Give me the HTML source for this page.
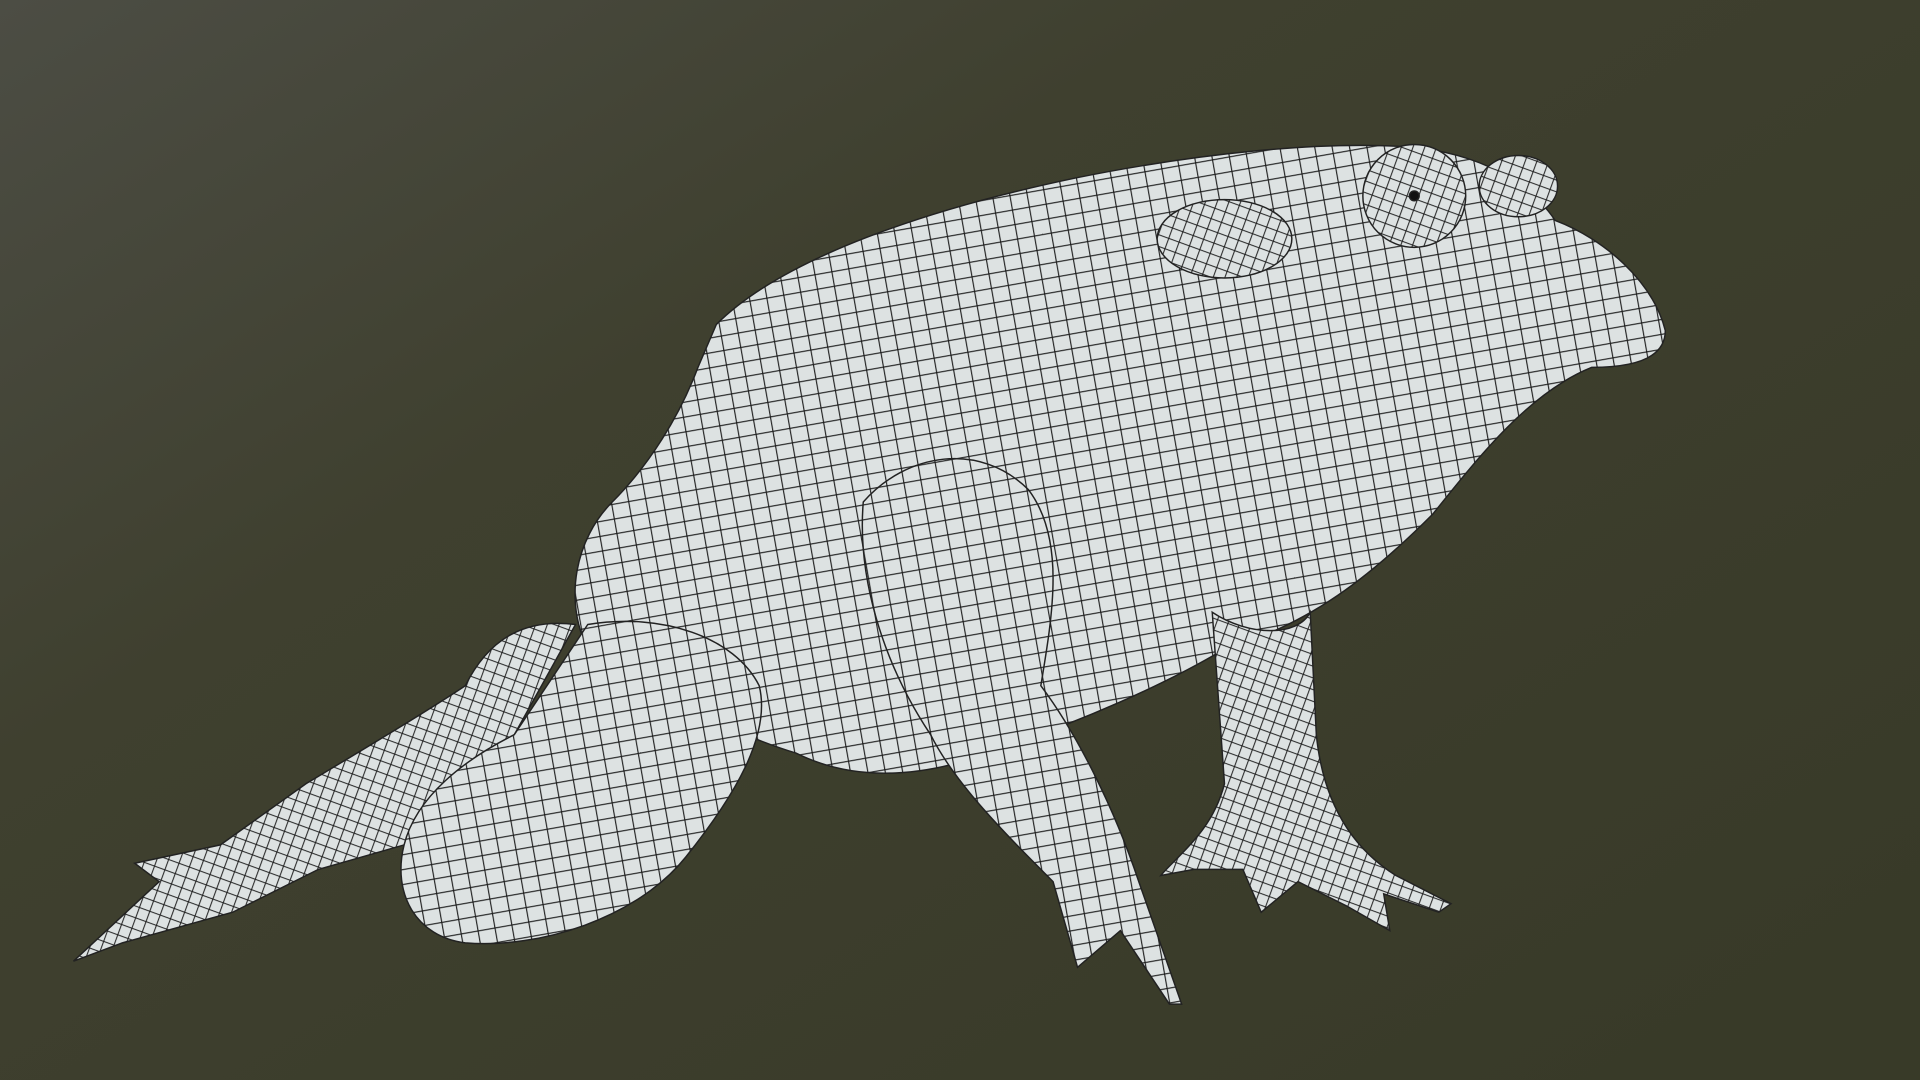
<!DOCTYPE html>
<html><head><style>
html,body{margin:0;padding:0;width:1920px;height:1080px;overflow:hidden;background:#3a3c2c}
svg{display:block}
</style></head><body>
<svg width="1920" height="1080" viewBox="0 0 1568 882" xmlns="http://www.w3.org/2000/svg">
<defs>
<linearGradient id="bg" x1="0" y1="0" x2="1" y2="0.9">
<stop offset="0" stop-color="#4c4d44"/>
<stop offset="0.35" stop-color="#3f402f"/>
<stop offset="1" stop-color="#383a28"/>
</linearGradient>
<pattern id="mesh" width="14" height="12" patternUnits="userSpaceOnUse" patternTransform="rotate(-10)">
<rect width="14" height="12" fill="#dde2e2"/>
<path d="M0 0.5H14M0.5 0V12" stroke="#1a1a1a" stroke-width="0.9"/>
</pattern>
<pattern id="mesh2" width="9" height="9" patternUnits="userSpaceOnUse" patternTransform="rotate(20)">
<rect width="9" height="9" fill="#dde2e2"/>
<path d="M0 0.5H9M0.5 0V9" stroke="#1a1a1a" stroke-width="0.8"/>
</pattern>
</defs>
<rect width="1568" height="882" fill="url(#bg)"/>
<g stroke="#222" stroke-width="1.2">
<path fill="url(#mesh2)" d="M470,510 C430,505 400,520 380,560 C350,580 300,610 250,640 L180,690 L110,705 L130,720 L60,785 L100,770 L190,745 L260,710 L330,690 L420,600 Z"/>
<path fill="url(#mesh)" d="M585,265 C640,210 760,170 880,145 C980,125 1080,115 1150,120 C1210,125 1250,150 1270,180 C1310,195 1350,230 1360,270 C1360,290 1340,300 1300,300 C1250,320 1210,370 1170,420 C1120,470 1070,510 1000,530 C950,560 880,590 820,610 C760,635 700,640 650,615 C600,600 520,560 480,530 C460,490 470,440 500,410 C530,380 555,340 570,300 Z"/>
<path fill="url(#mesh)" d="M480,510 C540,500 600,520 620,560 C630,600 600,650 560,700 C520,750 440,775 380,770 C340,765 320,730 330,690 C340,650 380,620 420,600 Z"/>
<path fill="url(#mesh2)" d="M990,500 C1020,520 1060,520 1070,500 L1075,600 C1080,650 1100,690 1140,715 L1185,738 L1175,745 L1130,730 L1135,760 L1100,740 L1060,720 L1030,745 L1015,710 L975,710 L948,715 C960,700 990,680 1000,640 Z"/>
<path fill="url(#mesh)" d="M705,410 C740,370 800,360 840,400 C870,440 860,500 850,560 C880,600 910,660 930,720 L965,820 L955,820 L915,760 L880,790 L860,720 C820,680 780,640 760,600 C720,540 700,470 705,410 Z"/>
<ellipse cx="1000" cy="195" rx="55" ry="32" fill="url(#mesh2)"/>
<ellipse cx="1240" cy="152" rx="32" ry="25" fill="url(#mesh2)"/>
<circle cx="1155" cy="160" r="42" fill="url(#mesh2)"/>
<circle cx="1155" cy="160" r="4" fill="#111"/>
</g>
</svg>
</body></html>
